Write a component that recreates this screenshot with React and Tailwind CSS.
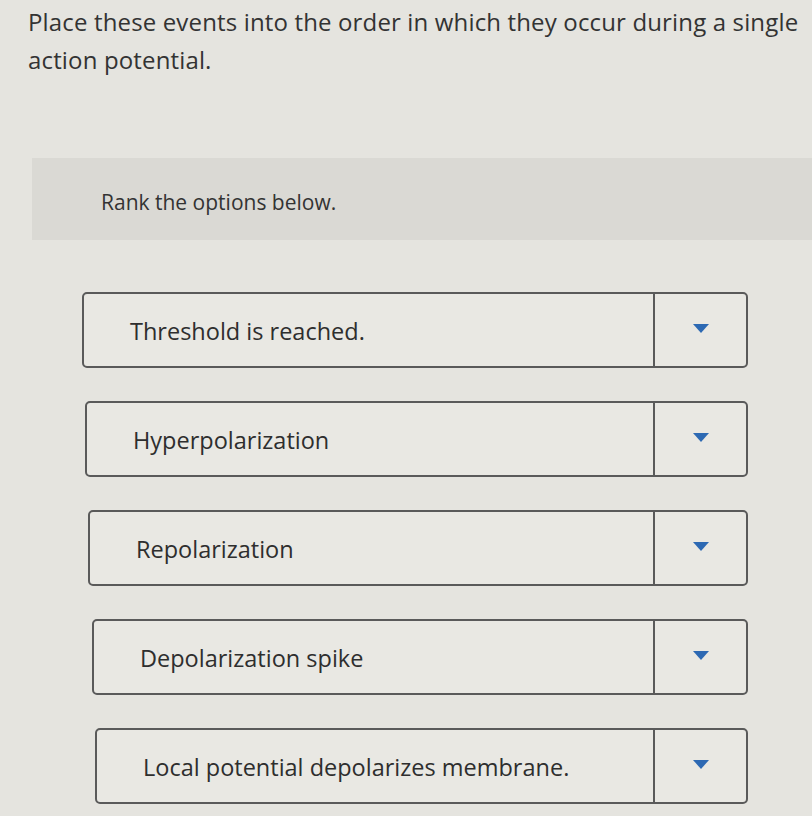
const options = [
  { label: 'Threshold is reached.', ml: 'ml-[82px]' },
  { label: 'Hyperpolarization', ml: 'ml-[85px]' },
  { label: 'Repolarization', ml: 'ml-[88px]' },
  { label: 'Depolarization spike', ml: 'ml-[92px]' },
  { label: 'Local potential depolarizes membrane.', ml: 'ml-[95px]' },
]

const RankRow = ({ label, ml }) => {
  return (
    <div className={`${ml} mr-[64px] h-[76px] flex rounded-[5px] border-2 border-[#5a5a5a] bg-[#e9e8e3]`}>
      <div className="flex-1 flex items-center pl-[46px] pt-[3px] text-[23.5px] text-[#2e2e2e]">
        {label}
      </div>
      <div className="w-[93px] border-l-2 border-[#5a5a5a] flex items-start justify-center pt-[29px]">
        <svg width="18" height="11" viewBox="0 0 18 11">
          <path d="M1 1 L17 1 L9 10 Z" fill="#2d69b3" />
        </svg>
      </div>
    </div>
  )
}

const App = () => {
  return (
    <div className="w-[812px] h-[816px] bg-[#e5e4df] overflow-hidden" style={{ fontFamily: '"Open Sans", Lato, sans-serif' }}>
      <div className="pl-[28px] pt-[3px] text-[24px] leading-[38px] tracking-[0.15px] text-[#333333]">
        Place these events into the order in which they occur during a single
        <br />
        action potential.
      </div>

      <div className="mt-[79px] ml-[32px] h-[82px] bg-[#dad9d4] flex items-center pl-[69px] pt-[8px] text-[21px] text-[#333333]">
        Rank the options below.
      </div>

      <div className="mt-[52px] flex flex-col gap-[33px]">
        {options.map((o) => (
          <RankRow key={o.label} label={o.label} ml={o.ml} />
        ))}
      </div>
    </div>
  )
}

export default App
